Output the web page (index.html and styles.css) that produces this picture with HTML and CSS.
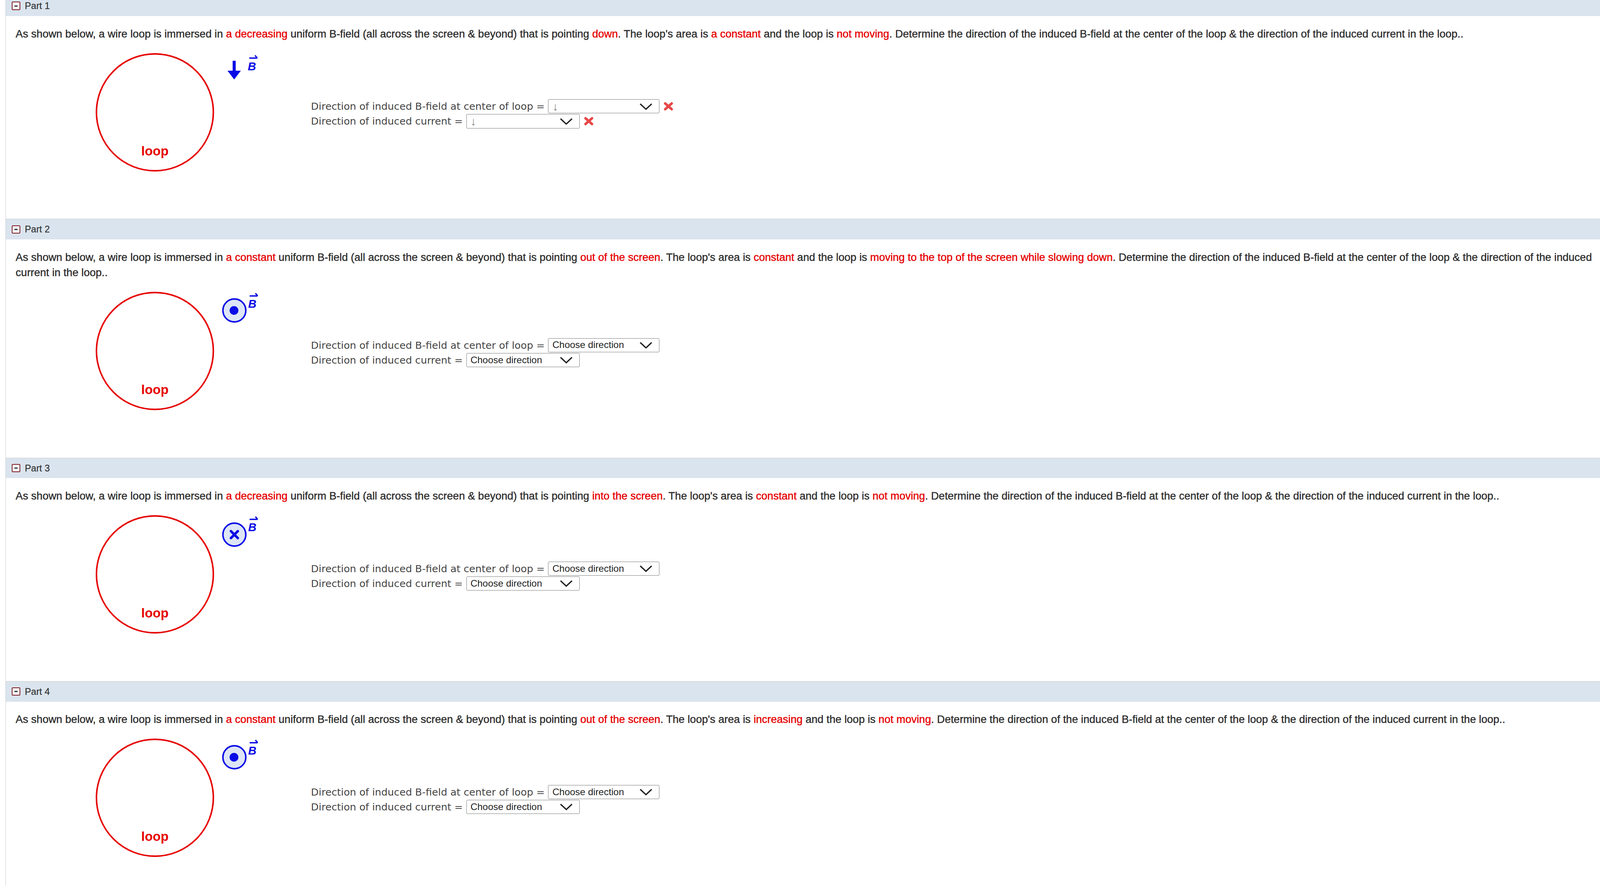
FILE: index.html
```html
<!DOCTYPE html>
<html lang="en">
<head>
<meta charset="utf-8">
<title>Induced current parts</title>
<link rel="stylesheet" href="styles.css">
</head>
<body>
<div class="page">

  <section class="part">
    <div class="part-header"><span class="toggle"></span><span>Part 1</span></div>
    <div class="part-body">
      <p class="question">As shown below, a wire loop is immersed in <span class="hl">a decreasing</span> uniform B-field (all across the screen &amp; beyond) that is pointing <span class="hl">down</span>. The loop's area is <span class="hl">a constant</span> and the loop is <span class="hl">not moving</span>. Determine the direction of the induced B-field at the center of the loop &amp; the direction of the induced current in the loop..</p>
      <div class="diagram">
        <svg class="figure" viewBox="0 0 460 312">
          <circle cx="157" cy="156" r="153" fill="none" stroke="#e60000" stroke-width="4"/>
          <text x="157" y="269" text-anchor="middle" class="loop-label">loop</text>
          <rect x="360.5" y="21" width="8" height="31" fill="#0a0ae6"/>
          <polygon points="347,47 382,47 364.5,70" fill="#0a0ae6"/>
          <text x="400" y="46" class="b-label">B</text>
          <path d="M404 14 H425 M425 14 L419 7" stroke="#0a0ae6" stroke-width="3.5" fill="none"/>
        </svg>
        <div class="answers">
          <div class="row">
            <span>Direction of induced B-field at center of loop =</span>
            <span class="select w1"><span class="value">↓</span><svg class="chev" viewBox="0 0 34 18"><polyline points="2,2 17,16 32,2" fill="none" stroke="#222" stroke-width="3.5"/></svg></span>
            <svg class="mark" viewBox="0 0 27 25"><path d="M5 5 L22 20 M22 5 L5 20" stroke="#e84646" stroke-width="6.5" stroke-linecap="round"/></svg>
          </div>
          <div class="row">
            <span>Direction of induced current =</span>
            <span class="select w2"><span class="value">↓</span><svg class="chev" viewBox="0 0 34 18"><polyline points="2,2 17,16 32,2" fill="none" stroke="#222" stroke-width="3.5"/></svg></span>
            <svg class="mark" viewBox="0 0 27 25"><path d="M5 5 L22 20 M22 5 L5 20" stroke="#e84646" stroke-width="6.5" stroke-linecap="round"/></svg>
          </div>
        </div>
      </div>
    </div>
  </section>

  <section class="part">
    <div class="part-header"><span class="toggle"></span><span>Part 2</span></div>
    <div class="part-body">
      <p class="question">As shown below, a wire loop is immersed in <span class="hl">a constant</span> uniform B-field (all across the screen &amp; beyond) that is pointing <span class="hl">out of the screen</span>. The loop's area is <span class="hl">constant</span> and the loop is <span class="hl">moving to the top of the screen while slowing down</span>. Determine the direction of the induced B-field at the center of the loop &amp; the direction of the induced current in the loop..</p>
      <div class="diagram">
        <svg class="figure" viewBox="0 0 460 312">
          <circle cx="157" cy="156" r="153" fill="none" stroke="#e60000" stroke-width="4"/>
          <text x="157" y="269" text-anchor="middle" class="loop-label">loop</text>
          <circle cx="365" cy="50" r="30" fill="#dde5f6" stroke="#0a0ae6" stroke-width="4"/>
          <circle cx="364" cy="50" r="11.5" fill="#0a0ae6"/>
          <text x="401" y="43" class="b-label">B</text>
          <path d="M405 12 H426 M426 12 L420 5" stroke="#0a0ae6" stroke-width="3.5" fill="none"/>
        </svg>
        <div class="answers">
          <div class="row">
            <span>Direction of induced B-field at center of loop =</span>
            <span class="select w1"><span class="value choose">Choose direction</span><svg class="chev" viewBox="0 0 34 18"><polyline points="2,2 17,16 32,2" fill="none" stroke="#222" stroke-width="3.5"/></svg></span>
          </div>
          <div class="row">
            <span>Direction of induced current =</span>
            <span class="select w2"><span class="value choose">Choose direction</span><svg class="chev" viewBox="0 0 34 18"><polyline points="2,2 17,16 32,2" fill="none" stroke="#222" stroke-width="3.5"/></svg></span>
          </div>
        </div>
      </div>
    </div>
  </section>

  <section class="part">
    <div class="part-header"><span class="toggle"></span><span>Part 3</span></div>
    <div class="part-body">
      <p class="question">As shown below, a wire loop is immersed in <span class="hl">a decreasing</span> uniform B-field (all across the screen &amp; beyond) that is pointing <span class="hl">into the screen</span>. The loop's area is <span class="hl">constant</span> and the loop is <span class="hl">not moving</span>. Determine the direction of the induced B-field at the center of the loop &amp; the direction of the induced current in the loop..</p>
      <div class="diagram">
        <svg class="figure" viewBox="0 0 460 312">
          <circle cx="157" cy="156" r="153" fill="none" stroke="#e60000" stroke-width="4"/>
          <text x="157" y="269" text-anchor="middle" class="loop-label">loop</text>
          <circle cx="365" cy="52" r="30" fill="#dde5f6" stroke="#0a0ae6" stroke-width="4"/>
          <path d="M356 43 L374 61 M374 43 L356 61" stroke="#0a0ae6" stroke-width="6.5" stroke-linecap="round"/>
          <text x="401" y="43" class="b-label">B</text>
          <path d="M405 12 H426 M426 12 L420 5" stroke="#0a0ae6" stroke-width="3.5" fill="none"/>
        </svg>
        <div class="answers">
          <div class="row">
            <span>Direction of induced B-field at center of loop =</span>
            <span class="select w1"><span class="value choose">Choose direction</span><svg class="chev" viewBox="0 0 34 18"><polyline points="2,2 17,16 32,2" fill="none" stroke="#222" stroke-width="3.5"/></svg></span>
          </div>
          <div class="row">
            <span>Direction of induced current =</span>
            <span class="select w2"><span class="value choose">Choose direction</span><svg class="chev" viewBox="0 0 34 18"><polyline points="2,2 17,16 32,2" fill="none" stroke="#222" stroke-width="3.5"/></svg></span>
          </div>
        </div>
      </div>
    </div>
  </section>

  <section class="part">
    <div class="part-header"><span class="toggle"></span><span>Part 4</span></div>
    <div class="part-body">
      <p class="question">As shown below, a wire loop is immersed in <span class="hl">a constant</span> uniform B-field (all across the screen &amp; beyond) that is pointing <span class="hl">out of the screen</span>. The loop's area is <span class="hl">increasing</span> and the loop is <span class="hl">not moving</span>. Determine the direction of the induced B-field at the center of the loop &amp; the direction of the induced current in the loop..</p>
      <div class="diagram">
        <svg class="figure" viewBox="0 0 460 312">
          <circle cx="157" cy="156" r="153" fill="none" stroke="#e60000" stroke-width="4"/>
          <text x="157" y="269" text-anchor="middle" class="loop-label">loop</text>
          <circle cx="365" cy="50" r="30" fill="#dde5f6" stroke="#0a0ae6" stroke-width="4"/>
          <circle cx="364" cy="50" r="11.5" fill="#0a0ae6"/>
          <text x="401" y="43" class="b-label">B</text>
          <path d="M405 12 H426 M426 12 L420 5" stroke="#0a0ae6" stroke-width="3.5" fill="none"/>
        </svg>
        <div class="answers">
          <div class="row">
            <span>Direction of induced B-field at center of loop =</span>
            <span class="select w1"><span class="value choose">Choose direction</span><svg class="chev" viewBox="0 0 34 18"><polyline points="2,2 17,16 32,2" fill="none" stroke="#222" stroke-width="3.5"/></svg></span>
          </div>
          <div class="row">
            <span>Direction of induced current =</span>
            <span class="select w2"><span class="value choose">Choose direction</span><svg class="chev" viewBox="0 0 34 18"><polyline points="2,2 17,16 32,2" fill="none" stroke="#222" stroke-width="3.5"/></svg></span>
          </div>
        </div>
      </div>
    </div>
  </section>

</div>
</body>
</html>
```

FILE: styles.css
```css
* {
  box-sizing: border-box;
}

html {
  zoom: 0.97803;
}

html,
body {
  margin: 0;
  padding: 0;
  background: #ffffff;
}

body {
  font-family: "Liberation Sans", Arial, sans-serif;
  color: #333333;
}

.page {
  margin: -12px 0 0 14px;
  border-left: 2px solid #cdcdcd;
}

.part-header {
  display: flex;
  align-items: center;
  gap: 12px;
  height: 54px;
  padding-left: 16px;
  border-top: 2px solid #cfcfcf;
  background: #dae4ee;
  font-size: 24.5px;
  color: #333333;
  -webkit-text-stroke: 0.3px currentColor;
}

.toggle {
  display: flex;
  align-items: center;
  justify-content: center;
  width: 22px;
  height: 22px;
  border: 2.5px solid #7f1d24;
  border-radius: 3px;
  background: #f3f5f8;
}

.toggle::before {
  content: "";
  width: 8px;
  height: 3px;
  background: #333333;
}

.part-body {
  padding: 26px 0 123px 26px;
}

.question {
  margin: 0;
  font-size: 28.15px;
  line-height: 40px;
  color: #2e2e2e;
  -webkit-text-stroke: 0.55px currentColor;
}

.hl {
  color: #e60000;
}

.diagram {
  display: flex;
  align-items: flex-start;
  height: 312px;
  margin-top: 30px;
}

.figure {
  flex: none;
  width: 460px;
  height: 312px;
  margin-left: 207px;
}

.loop-label {
  font-family: "Liberation Sans", Arial, sans-serif;
  font-weight: bold;
  font-size: 34px;
  fill: #e60000;
}

.b-label {
  font-family: "Liberation Sans", Arial, sans-serif;
  font-weight: bold;
  font-style: italic;
  font-size: 30px;
  fill: #0a0ae6;
}

.answers {
  margin-left: 106px;
  margin-top: 122px;
  font-family: "DejaVu Sans", Verdana, sans-serif;
  font-size: 26.2px;
  color: #444444;
}

.row {
  display: flex;
  align-items: center;
  height: 37px;
  margin-bottom: 2px;
  white-space: nowrap;
}

.select {
  display: flex;
  align-items: center;
  justify-content: space-between;
  height: 37px;
  margin-left: 9px;
  padding: 0 17px 0 10px;
  border: 1.5px solid #7a7a7a;
  border-radius: 3px;
  background: #ffffff;
  font-family: "Liberation Sans", Arial, sans-serif;
  font-size: 25px;
  color: #222222;
}

.select.w1 {
  width: 291px;
}

.select.w2 {
  width: 297px;
}

.value {
  color: #808080;
  font-size: 30px;
  line-height: 1;
}

.value.choose {
  color: #222222;
  font-size: 25px;
}

.chev {
  flex: none;
  width: 34px;
  height: 18px;
}

.mark {
  flex: none;
  width: 27px;
  height: 25px;
  margin-left: 10px;
}
```
